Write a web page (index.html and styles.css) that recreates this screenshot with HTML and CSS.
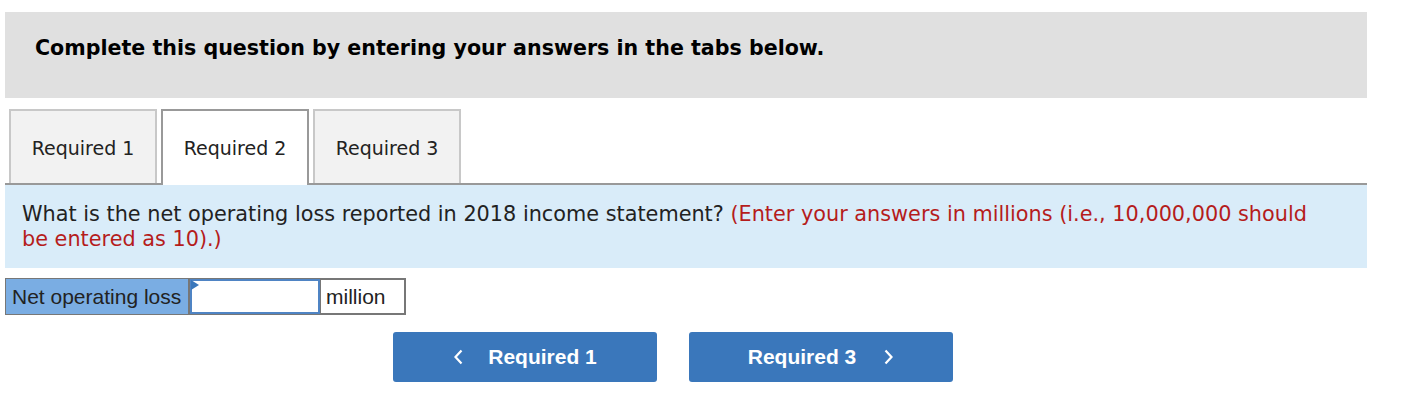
FILE: index.html
```html
<!DOCTYPE html>
<html>
	<head>
		<meta charset="UTF-8">
		<title>Required 2</title>
		<link rel="stylesheet" href="styles.css">
	</head>

	<body>
		<div class="question">
			<div class="header">Complete this question by entering your answers in the tabs below.</div>

			<ul class="tabs">
				<li>Required 1</li>
				<li class="current">Required 2</li>
				<li>Required 3</li>
			</ul>

			<div class="prompt">
				What is the net operating loss reported in 2018 income statement?
				<span class="hint">(Enter your answers in millions (i.e., 10,000,000 should be entered as 10).)</span>
			</div>

			<div class="answerRow">
				<div class="label">Net operating loss</div>
				<div class="field">
					<input type="text">
					<span class="flag"></span>
				</div>
				<div class="unit">million</div>
			</div>

			<div class="nav">
				<a href="#" class="btn prev">
					<svg width="10" height="16" viewBox="0 0 10 16"><path d="M8.5 1.5 L2.5 8 L8.5 14.5" fill="none" stroke="#fff" stroke-width="2.2"/></svg>
					<span>Required 1</span>
				</a>
				<a href="#" class="btn next">
					<span>Required 3</span>
					<svg width="10" height="16" viewBox="0 0 10 16"><path d="M1.5 1.5 L7.5 8 L1.5 14.5" fill="none" stroke="#fff" stroke-width="2.2"/></svg>
				</a>
			</div>
		</div>
	</body>
</html>
```

FILE: styles.css
```css
*{
	margin: 0;
	padding: 0;
	box-sizing: border-box;
}
ul,li{
	list-style: none;
}
a{
	text-decoration: none;
}
input{
	outline: none;
}

body{
	background-color: #fff;
	font-family: "DejaVu Sans", Verdana, sans-serif;
	color: #111;
}

.question{
	width: 1362px;
	margin: 12px 0 0 5px;
}

.header{
	height: 86px;
	padding: 25px 30px 0;
	background-color: #e0e0e0;
	font-size: 20.6px;
	font-weight: bold;
	line-height: 22px;
	color: #000;
}

.tabs{
	display: flex;
	margin-top: 11px;
	padding-left: 4px;
	border-bottom: 2px solid #999;
}

.tabs li{
	width: 148px;
	height: 74px;
	margin-right: 4px;
	border: 2px solid #c8c8c8;
	border-bottom: none;
	background-color: #f2f2f2;
	font-size: 19px;
	line-height: 74px;
	text-align: center;
	color: #222;
}

.tabs li.current{
	height: 76px;
	margin-bottom: -2px;
	border-color: #999;
	background-color: #fff;
}

.prompt{
	padding: 17px 40px 16px 17px;
	background-color: #d9ecf9;
	font-size: 20.8px;
	line-height: 25px;
	color: #222;
}

.prompt .hint{
	color: #b51c1c;
}

.answerRow{
	display: flex;
	height: 37px;
	margin-top: 10px;
	font-family: "Liberation Sans", Arial, sans-serif;
	font-size: 21px;
	color: #222;
}

.answerRow .label{
	width: 183px;
	padding-left: 6px;
	border: 1px solid #777;
	border-right: none;
	background-color: #7aade3;
	line-height: 35px;
}

.answerRow .field{
	position: relative;
	width: 133px;
	border: 1px solid #777;
	border-left-width: 2px;
}

.answerRow .field input{
	display: block;
	width: 100%;
	height: 100%;
	border: 2px solid #4f84c4;
	font-size: 20px;
}

.answerRow .field .flag{
	position: absolute;
	left: 1px;
	top: 1px;
	width: 0;
	height: 0;
	border-top: 5px solid transparent;
	border-bottom: 5px solid transparent;
	border-left: 8px solid #3a77bb;
}

.answerRow .unit{
	width: 85px;
	padding-left: 5px;
	border: 2px solid #777;
	border-left: none;
	background-color: #fff;
	line-height: 33px;
}

.nav{
	display: flex;
	margin-top: 17px;
	padding-left: 388px;
}

.btn{
	display: flex;
	align-items: center;
	justify-content: center;
	width: 264px;
	height: 50px;
	margin-right: 32px;
	border-radius: 3px;
	background-color: #3a77bb;
	font-family: "Liberation Sans", Arial, sans-serif;
	font-size: 21px;
	font-weight: bold;
	color: #fff;
}

.btn svg{
	display: block;
}

.btn.prev span{
	margin-left: 25px;
}

.btn.next span{
	margin-right: 28px;
}
```
